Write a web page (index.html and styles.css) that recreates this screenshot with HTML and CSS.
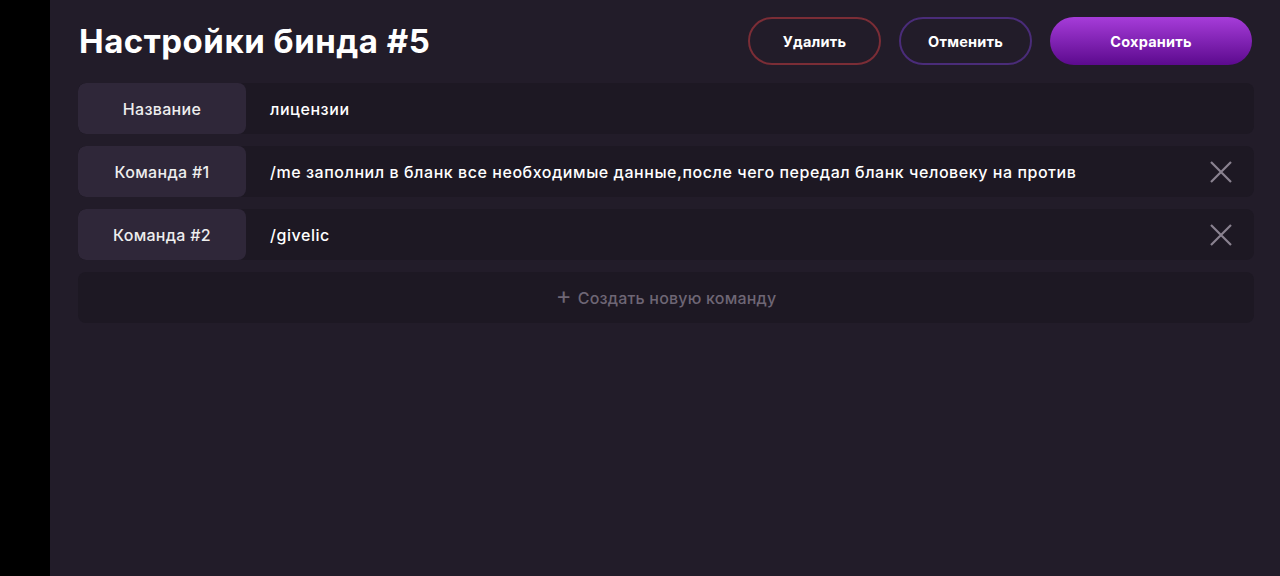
FILE: index.html
```html
<!DOCTYPE html>
<html lang="ru">
<head>
<meta charset="utf-8">
<link rel="stylesheet" href="styles.css">
</head>
<body>
<div class="app">
  <aside class="side"></aside>
  <main class="main">
    <header class="head">
      <h1 class="title">Настройки бинда #5</h1>
      <div class="actions">
        <button class="btn btn-del">Удалить</button>
        <button class="btn btn-cancel">Отменить</button>
        <button class="btn btn-save">Сохранить</button>
      </div>
    </header>
    <section class="rows">
      <div class="row">
        <div class="label">Название</div>
        <div class="value">лицензии</div>
      </div>
      <div class="row">
        <div class="label">Команда #1</div>
        <div class="value">/me заполнил в бланк все необходимые данные,после чего передал бланк человеку на против</div>
        <button class="close" aria-label="удалить"><svg viewBox="0 0 22 22" width="22" height="22"><path d="M1 1L21 21M21 1L1 21" stroke="#8a8290" stroke-width="2.2" fill="none"/></svg></button>
      </div>
      <div class="row">
        <div class="label">Команда #2</div>
        <div class="value">/givelic</div>
        <button class="close" aria-label="удалить"><svg viewBox="0 0 22 22" width="22" height="22"><path d="M1 1L21 21M21 1L1 21" stroke="#8a8290" stroke-width="2.2" fill="none"/></svg></button>
      </div>
      <div class="row add">
        <span class="plus">+</span> Создать новую команду
      </div>
    </section>
  </main>
</div>
</body>
</html>
```

FILE: styles.css
```css
* { box-sizing: border-box; }
html, body { margin: 0; height: 100%; }
body {
  font-family: Inter, "Noto Sans", sans-serif;
  background: #221c29;
  color: #fff;
}
.app { display: flex; height: 576px; }
.side { width: 50px; background: #000; flex: none; }
.main { flex: 1; padding: 17px 26px 0 28px; }
.head { display: flex; align-items: center; justify-content: space-between; height: 48px; }
.title { margin: 0 0 0 1px; font-size: 33px; font-weight: 700; letter-spacing: 0.5px; }
.actions { display: flex; gap: 18px; margin-right: 2px; }
.btn {
  height: 48px; border-radius: 24px; font: inherit; font-size: 14.5px; font-weight: 700;
  color: #fff; background: transparent; cursor: pointer; letter-spacing: 0.2px;
}
.btn-del { width: 133px; border: 2px solid #7b2d36; }
.btn-cancel { width: 133px; border: 2px solid #4a2c79; }
.btn-save { width: 202px; border: 0; background: linear-gradient(#a63cd9, #5c0a8e); }
.rows { display: flex; flex-direction: column; gap: 12px; margin-top: 18px; }
.row {
  display: flex; align-items: center; height: 51px; background: #1d1823;
  border-radius: 8px; overflow: hidden;
}
.label {
  width: 168px; align-self: stretch; display: flex; align-items: center; justify-content: center;
  background: #2f2739; border-radius: 8px; font-size: 16px; font-weight: 500; color: #eee; letter-spacing: 0.3px;
}
.value { flex: 1; padding-left: 24px; font-size: 16px; font-weight: 500; letter-spacing: 0.55px; }
.close { background: none; border: 0; padding: 0; margin-right: 22px; width: 22px; height: 22px; display: flex; }
.add { justify-content: center; color: #6e6675; font-size: 16px; font-weight: 500; gap: 6px; letter-spacing: 0.2px; }
.plus { font-size: 24px; line-height: 1; font-weight: 400; margin-top: -3px; }
```
